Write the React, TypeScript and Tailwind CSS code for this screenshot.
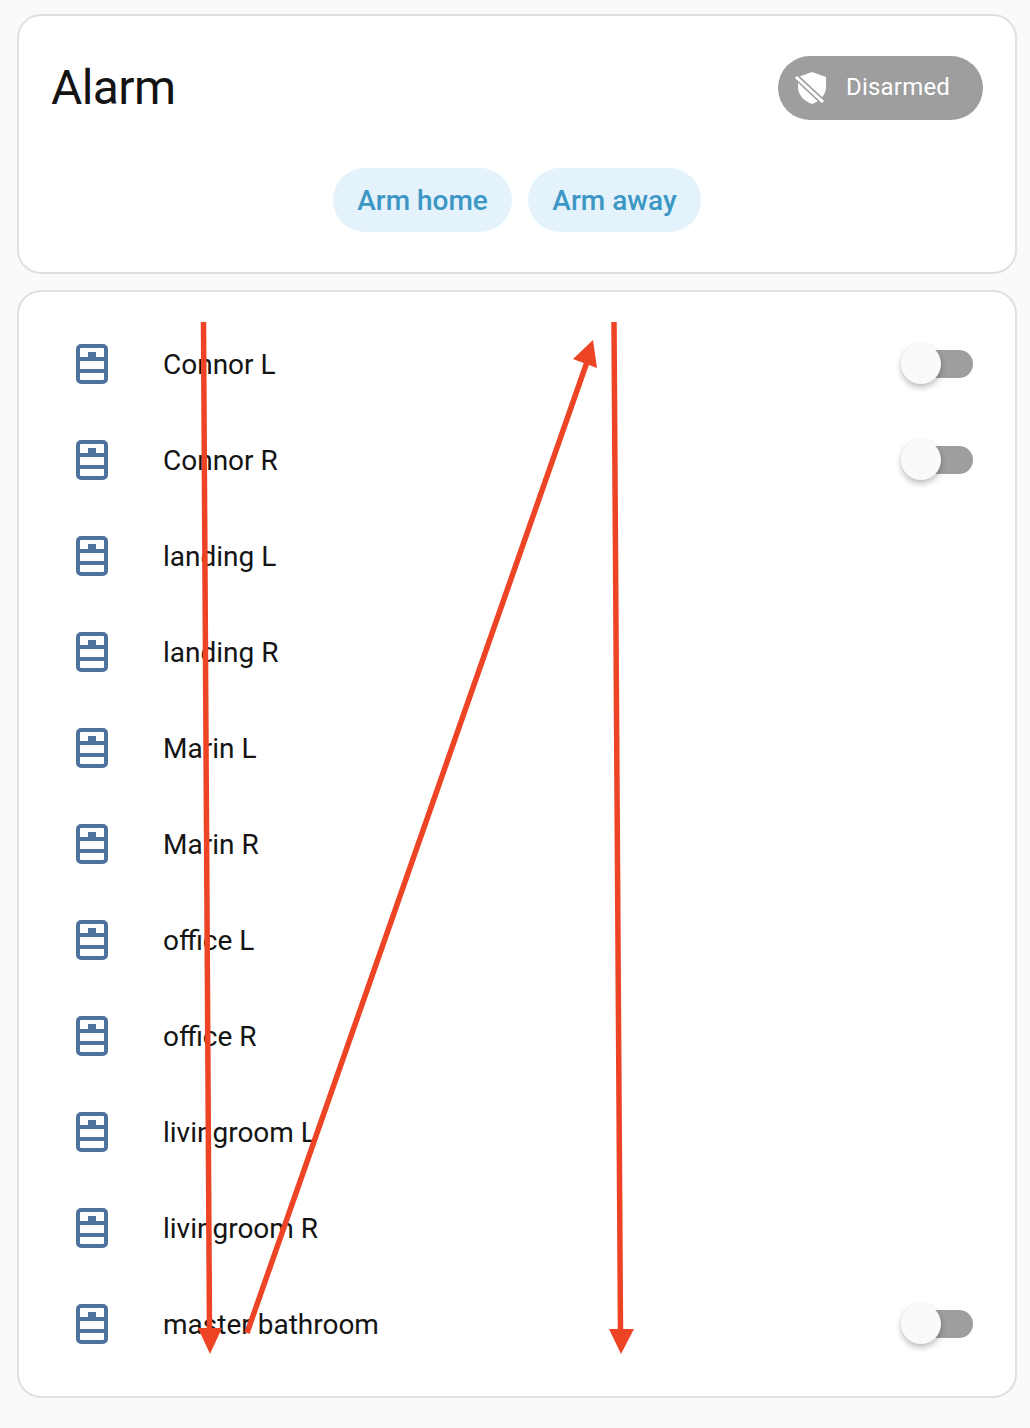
const rows: [string, boolean][] = [
  ["Connor L", true],
  ["Connor R", true],
  ["landing L", false],
  ["landing R", false],
  ["Marin L", false],
  ["Marin R", false],
  ["office L", false],
  ["office R", false],
  ["livingroom L", false],
  ["livingroom R", false],
  ["master bathroom", true],
];

function WindowIcon() {
  return (
    <svg width="32" height="40" viewBox="0 0 32 40" className="block">
      <rect x="2" y="2" width="28" height="36" rx="3" fill="none" stroke="#4f739f" strokeWidth="4" />
      <rect x="2" y="13" width="28" height="4" fill="#4f739f" />
      <rect x="2" y="25" width="28" height="4" fill="#4f739f" />
      <rect x="12" y="8" width="8" height="6" fill="#4f739f" />
    </svg>
  );
}

function ShieldOff() {
  return (
    <svg width="32" height="34" viewBox="0 0 32 34" className="block">
      <path d="M17 1 L31 6 V16 C31 24 25 30 17 33 C9 30 3 24 3 16 V6 Z" fill="#fff" />
      <path d="M0 5 L29 32" stroke="#9e9e9e" strokeWidth="6" />
      <path d="M1 6 L28 31" stroke="#fff" strokeWidth="3" />
    </svg>
  );
}

function Toggle() {
  return (
    <div className="relative h-7 w-[64px] rounded-full bg-[#9e9e9e]">
      <div className="absolute left-[-8px] top-[-6px] h-10 w-10 rounded-full bg-[#fafafa] shadow-[0_3px_6px_rgba(0,0,0,0.28)]" />
    </div>
  );
}

export default function App() {
  return (
    <div className="relative h-[1428px] w-[1030px] overflow-hidden bg-[#fafafa] pl-[17px] pr-[13px] pt-[14px] font-['Roboto',sans-serif] text-[#141414]">
      <div className="flex h-[260px] flex-col rounded-[24px] border-2 border-[#e0e0e0] bg-white">
        <div className="flex items-start justify-between pl-[32px] pr-[32px] pt-[40px]">
          <div className="text-[48px] leading-[64px] tracking-[-0.6px]">Alarm</div>
          <div className="flex h-16 w-[205px] items-center gap-[19px] rounded-full bg-[#9e9e9e] pl-[17px] text-[24px] tracking-[0.2px] text-white">
            <ShieldOff />
            <span className="translate-y-[-1px]">Disarmed</span>
          </div>
        </div>
        <div className="mt-[48px] flex justify-center gap-4">
          <div className="flex h-16 w-[179px] items-center justify-center rounded-full bg-[#e3f2fb] pt-[2px] text-[28px] font-medium text-[#3d97c4]">Arm home</div>
          <div className="flex h-16 w-[173px] items-center justify-center rounded-full bg-[#e3f2fb] pt-[2px] text-[28px] font-medium text-[#3d97c4]">Arm away</div>
        </div>
      </div>
      <div className="mt-[16px] h-[1108px] rounded-[24px] border-2 border-[#e0e0e0] bg-white pt-[24px]">
        {rows.map(([name, on]) => (
          <div key={name} className="flex h-24 items-center pl-[57px] pr-[42px]">
            <WindowIcon />
            <div className="ml-[55px] flex-1 pt-[2px] text-[28px]">{name}</div>
            {on && <Toggle />}
          </div>
        ))}
      </div>
      <svg width="1030" height="1428" viewBox="0 0 1030 1428" className="pointer-events-none absolute left-0 top-0">
        <path d="M203.5 322 L209.5 1332" stroke="#ee4426" strokeWidth="5.5" fill="none" />
        <path d="M198 1328 L222 1328 L210 1354 Z" fill="#ee4426" />
        <path d="M247 1333 L587 362" stroke="#ee4426" strokeWidth="5.5" fill="none" />
        <path d="M593 340 L597 368 L573 359 Z" fill="#ee4426" />
        <path d="M614 322 L620.5 1332" stroke="#ee4426" strokeWidth="5.5" fill="none" />
        <path d="M609 1329 L634 1329 L621 1354 Z" fill="#ee4426" />
      </svg>
    </div>
  );
}
